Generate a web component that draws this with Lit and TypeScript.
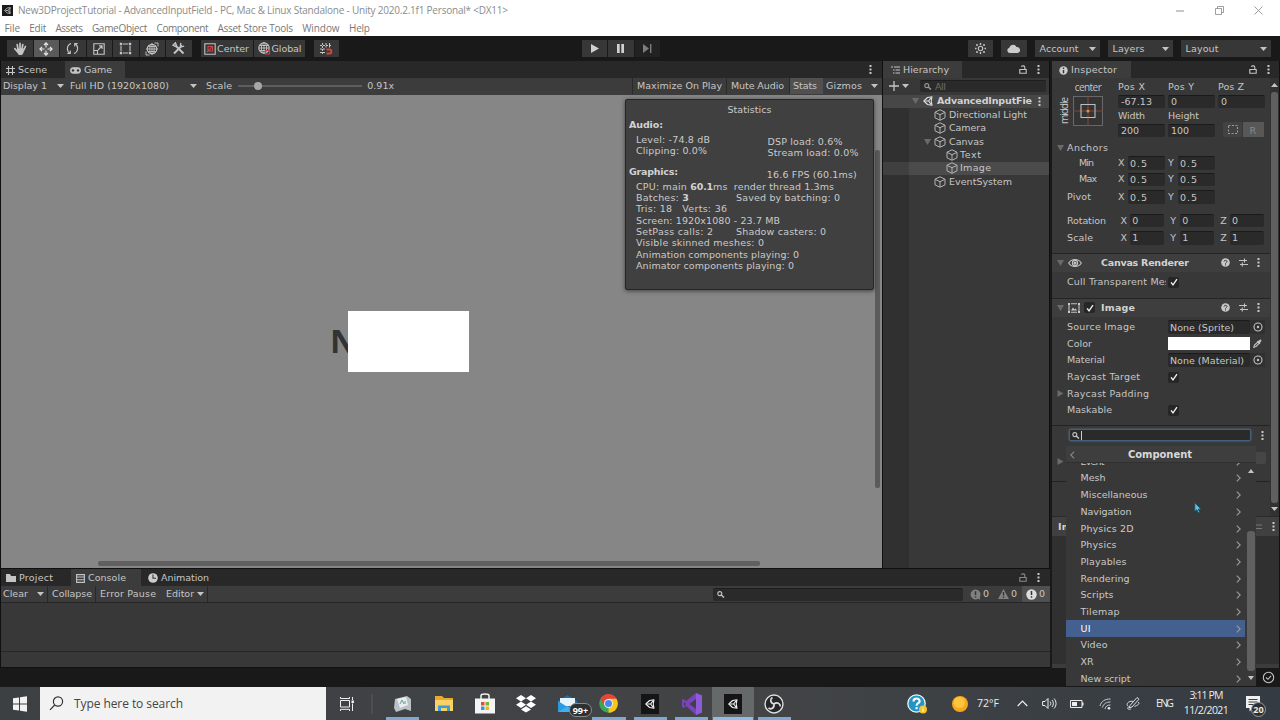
import { LitElement, html, svg, css } from "lit";
import { customElement } from "lit/decorators.js";

const UI = '"DejaVu Sans"';
const SYS = '"Open Sans"';
const ctx = document.createElement("canvas").getContext("2d")!;

/* Label whose tracking is derived from the width it has to occupy. */
const tx = (text: string, width: number, cls = "u") => {
  const fonts: Record<string, string> = {
    u: `9.5px ${UI}`,
    b: `bold 9.5px ${UI}`,
    bb: `bold 10px ${UI}`,
    m: `10px ${SYS}`,
    s: `12px ${SYS}`,
    t: `10.5px ${SYS}`,
  };
  ctx.font = fonts[cls];
  const ls = (width - ctx.measureText(text).width) / Math.max(1, text.length - 1);
  return html`<span class="tx ${cls}" style="letter-spacing:${ls.toFixed(3)}px">${text}</span>`;
};

const icon = (w: number, h: number, body: unknown, vb = `0 0 ${w} ${h}`) =>
  html`<svg width=${w} height=${h} viewBox=${vb} fill="none" stroke="#c4c4c4" stroke-width="1.1">${body}</svg>`;

const caret = () => icon(7, 4, svg`<path d="M0 0H7L3.5 4Z" fill="#c4c4c4" stroke="none"/>`);
const fold = () => icon(7, 6, svg`<path d="M0 0H7L3.5 6Z" fill="#6a6a6a" stroke="none"/>`);
const foldR = () => icon(7, 7, svg`<path d="M.5 0V7L6.5 3.5Z" fill="#6a6a6a" stroke="none"/>`);
const dots = () => icon(3, 9, svg`<path d="M.5 0h2v2h-2zM.5 3.5h2v2h-2zM.5 7h2v2h-2z" fill="#c8c8c8" stroke="none"/>`);
const lock = (c = "#c4c4c4") => icon(8, 9, svg`<path d="M.8 4.5H7.2V8.3H.8ZM2.3 1.6C3 .6 5.8 .4 5.8 2.3V4.5" stroke=${c} stroke-width="1.1"/>`);
const lens = (c = "#c4c4c4") => icon(8, 7, svg`<circle cx="2.8" cy="2.6" r="2" stroke=${c}/><path d="M4.3 4L7 6.6" stroke=${c} stroke-width="1.4"/>`);
const cube = () => icon(12, 12, svg`<path d="M6 .8L11 3.2V8.8L6 11.3L1 8.8V3.2ZM1.2 3.4L6 5.7L10.8 3.4M6 5.7V11" stroke="#b4b4b4" stroke-width="1"/>`);
const unity = (s = 10, c = "#e0e0e0") =>
  icon(s, s, svg`<path d="M.8 5L4.6 1.5L9 .8L8.2 5L9 9.2L4.6 8.5Z M2.4 5H5.6L8 1.9M5.6 5L8 8.1" stroke=${c} stroke-width="1.05" stroke-linejoin="round"/>`, "0 0 10 10");
const check = () => html`<span class="chk">${icon(8, 8, svg`<path d="M1 4.4L3 6.8L7 1.2" stroke="#eee" stroke-width="1.4"/>`)}</span>`;
const help = () => icon(9, 9, svg`<circle cx="4.5" cy="4.5" r="4.3" fill="#c8c8c8" stroke="none"/><path d="M3 3.6C3 1.9 6 1.9 6 3.6C6 4.6 4.5 4.5 4.5 5.6M4.5 6.4V7.5" stroke="#333" stroke-width="1"/>`);
const sliders = () => icon(9, 9, svg`<path d="M0 2.5H8M5.5 .5V4.5M1 6.5H9M3.3 4.5V8.5"/>`);
const target = () => icon(10, 10, svg`<circle cx="5" cy="5" r="4"/><circle cx="5" cy="5" r="1.2" fill="#c4c4c4" stroke="none"/>`);
const chevR = () => icon(5, 8, svg`<path d="M.8 .6L4.2 4L.8 7.4" stroke="#999" stroke-width="1.2"/>`);
const eye = () => icon(14, 10, svg`<path d="M.7 5C3.5 .3 10.5 .3 13.3 5C10.5 9.7 3.5 9.7 .7 5Z"/><circle cx="7" cy="5" r="2.6"/><circle cx="7" cy="5" r="1" fill="#c4c4c4"/>`);

const hand = () => icon(14, 14, svg`<path d="M5 7.5L4.2 2.5M7 7V1.3M9 7L9.8 2.5M10.8 8L12.4 4.5M4.3 9.5L1.8 6.6" stroke-width="1.7" stroke-linecap="round"/><path d="M4 6.6H11.3L10.6 10.5L9 13H5.8L3.6 9.8Z" fill="#c4c4c4" stroke="none"/>`);
const move = () => icon(14, 14, svg`<path d="M7 1.5V5.5M7 8.5V12.5M1.5 7H5.5M8.5 7H12.5M5 3L7 .9L9 3M5 11L7 13.1L9 11M3 5L.9 7L3 9M11 5L13.1 7L11 9" stroke="#e8e8e8"/>`);
const rotate = () => icon(13, 13, svg`<path d="M5 1.5C.5 3.2 .4 8.8 3.6 11M8 11.5C12.5 9.8 12.6 4.2 9.4 2M1.3 11.5H4.3V8.5M11.7 1.5H8.7V4.5"/>`);
const scale = () => icon(12, 12, svg`<path d="M.8 .8H11.2V11.2H.8ZM.8 7.5H4.5V11.2M5 7L9 3M6 2.9H9.1V6"/>`);
const rectT = () => icon(13, 13, svg`<path d="M2 4V9M11 4V9M4 2H9M4 11H9"/><path d="M.8 .8h2.4v2.4H.8zM9.8 .8h2.4v2.4H9.8zM.8 9.8h2.4v2.4H.8zM9.8 9.8h2.4v2.4H9.8z" fill="#c4c4c4" stroke="none"/>`);
const globeT = () => icon(14, 14, svg`<circle cx="7" cy="7" r="4.8"/><path d="M7 1V13M1 7H13M3.2 4.5H10.8M3.2 9.5H10.8M9.5 1H13V4.5M1 9.5V13H4.5" stroke-width=".9"/><ellipse cx="7" cy="7" rx="2.2" ry="4.8" stroke-width=".9"/>`);
const wrench = () => icon(13, 13, svg`<path d="M2 11.5L10 3.5M3.5 3.5L11.5 11.5" stroke-width="1.9"/><path d="M9 1C7.8 4.4 8.8 5.3 12.2 4.2M1 3.2L3.4 .8L4.5 3.5L3.5 4.5Z" stroke-width="1.4"/>`);
const centerI = () => icon(12, 12, svg`<path d="M.8 .8H11.2V11.2H.8Z"/><path d="M3 9.2L8.5 3.7M4 3.5h4.5V8H4Z" stroke="#c8454a"/>`);
const globalI = () => icon(13, 13, svg`<circle cx="6" cy="6" r="5.2"/><path d="M1 6H11M6 1V11M2 3.5H10M2 8.5H7" stroke-width=".9"/><ellipse cx="6" cy="6" rx="2.6" ry="5.2" stroke-width=".9"/><path d="M7.5 12V8.5H11.5V12Z" stroke="#c8454a"/>`);
const snapI = () => icon(14, 13, svg`<path d="M3.5 1V12M7 1V5.5M10.5 1V5.5M1 3.5H13M1 7H6M1 10.5H6" stroke-dasharray="2 1"/><path d="M7.5 7.5H10.5C13 7.5 13 11.5 10.5 11.5H7.5" stroke="#d8453f" stroke-width="1.8"/>`);

const field = (text: string, w: number, cls: string) => html`<span class="field ${cls}">${tx(text, w)}</span>`;

@customElement("app-root")
export class AppRoot extends LitElement {
  static styles = css`
    :host { display: block; width: 1280px; height: 720px; overflow: hidden; position: relative; background: #191919; color: #c6c6c6; font-family: "DejaVu Sans", sans-serif; }
    * { box-sizing: border-box; }
    svg { display: block; flex: none; }
    .tx { white-space: pre; flex: none; display: block; }
    .u { font: 9.5px/12px "DejaVu Sans", sans-serif; }
    .b { font: bold 9.5px/12px "DejaVu Sans", sans-serif; color: #d2d2d2; }
    .bb { font: bold 10px/13px "DejaVu Sans", sans-serif; color: #d8d8d8; }
    .m { font: 10px/14px "Open Sans", sans-serif; }
    .s { font: 12px/16px "Open Sans", sans-serif; }
    .t { font: 10.5px/15px "Open Sans", sans-serif; }
    .row, .c { display: flex; align-items: center; flex: none; }
    .c { justify-content: center; }
    .col { display: flex; flex-direction: column; }
    .grow { flex: 1; }

    .title { height: 20px; background: #fff; color: #8c8c8c; padding-left: 2px; gap: 5px; }
    .logo { width: 11px; height: 11px; background: #1b1b1b; }
    .winbtns { margin-left: auto; gap: 30px; padding-right: 17px; }
    .menu { height: 16px; background: #fff; color: #777; padding-left: 4.5px; gap: 9.4px; }
    .tools { height: 25px; background: #191919; padding-left: 7px; }
    .tb { height: 17px; background: #373737; }
    .w25 { width: 25.5px; margin-right: 1px; }
    .on { background: #5a5a5a; }
    .dim { opacity: .55; background: #2b2b2b; }
    .g10 { margin-left: 9px; }
    .play { margin-left: 241.5px; }
    .sun { margin-left: 306.5px; }
    .cloud { margin-left: 7px; }
    .pivot { justify-content: flex-start; }
    .cw { width: 52px; padding-left: 3.5px; gap: 1px; margin: 0 1px 0 8px; }
    .gw { width: 51px; padding-left: 4px; gap: 1px; }
    .dd { justify-content: space-between; padding: 0 4px 0 5px; margin-left: 8px; }
    .first { margin-left: 7px; }
    .w65 { width: 65px; } .w90 { width: 90px; }

    .work { display: flex; height: 607px; }
    .left { width: 1050px; padding-left: 1px; background: #101010; flex: none; }
    .topsplit { display: flex; height: 507px; gap: 1px; }
    .game { width: 881px; }
    .tabs { height: 17px; background: #282828; }
    .tab { height: 17px; display: flex; align-items: center; gap: 3px; padding: 1px 0 0 5px; }
    .act { background: #3c3c3c; }
    .w64 { width: 64px; } .w60 { width: 60px; } .w70 { width: 70px; } .w79 { width: 79px; }
    .hp { padding-left: 8px; } .ip { padding-left: 7px; } .an { padding-left: 7px; }
    .end { margin-left: auto; display: flex; align-items: center; gap: 10px; padding-right: 10px; }
    .hier .end, .insp .end { padding-right: 9px; }
    .bar { height: 17px; background: #3c3c3c; padding: 0 0 1px 2px; }
    .sep { border-left: 1px solid #2a2a2a; height: 16px; padding-left: 4px; display: flex; align-items: center; }
    .m6 { margin-left: 6px; } .m9 { margin-left: 9px; } .m10 { margin-left: 10px; } .m21 { margin-left: 21px; }
    .z94 { width: 94px; } .z63 { width: 63px; }
    .z34 { width: 34px; padding-left: 3px; background: #505050; }
    .z59 { width: 59px; justify-content: space-between; padding: 0 4px 0 3px; border-left: none; }
    .slider { width: 124px; height: 2px; background: #5e5e5e; margin: 0 5px 0 6px; position: relative; }
    .knob { position: absolute; left: 16px; top: -3px; width: 8px; height: 8px; border-radius: 4px; background: #a8a8a8; }
    .view { height: 473px; background: #868686; position: relative; overflow: hidden; }
    .word { position: absolute; left: 329px; top: 225px; font: bold 33px/42px "Noto Sans", sans-serif; color: #333; }
    .rect { position: absolute; left: 347px; top: 216px; width: 121px; height: 61px; background: #fff; }
    .vsb { position: absolute; left: 874px; top: 55px; width: 5px; height: 338px; background: #5b5b5b; border-radius: 2px; }
    .hsb { position: absolute; left: 97px; top: 466px; width: 662px; height: 5px; background: #606060; border-radius: 2px; }
    .stats { position: absolute; left: 624px; top: 4px; width: 249px; height: 191px; background: #404040; border: 1px solid #262626; border-radius: 2px; box-shadow: 0 1px 4px #0008; padding: 3.5px 3px; color: #cacaca; }
    .mid { justify-content: center; height: 13px; }
    .h15 { height: 16px; }
    .two { display: grid; grid-template-columns: 131.5px 1fr; padding: 1.5px 0 0 7px; height: 30px; align-items: start; }
    .two .tx { line-height: 11.3px; }
    .lower { padding-top: 2px; }
    .gr { display: flex; justify-content: space-between; padding-right: 13px; height: 18px; align-items: center; }
    .gr .tx:last-child { padding-top: 6px; }
    .lines { padding-left: 7px; }
    .ln { display: flex; height: 11.35px; align-items: center; }
    .ln .tx { line-height: 11px; }
    .g1 { width: 100px; display: flex; flex: none; }

    .hier { width: 166px; background: #383838; }
    .hbar { height: 16.6px; background: #383838; padding: 0 3px 0 6px; gap: 3px; }
    .search { background: #2a2a2a; height: 12px; border-radius: 2px; border-top: 1px solid #1e1e1e; display: flex; align-items: center; gap: 3px; padding-left: 4px; color: #6e6e6e; }
    .sw { width: 126px; margin-left: 8px; }
    .tree { flex: 1; background: linear-gradient(90deg, #303030 26px, #383838 26px); }
    .node { height: 13.35px; gap: 3px; display: flex; align-items: center; }
    .d0 { padding-left: 29px; background: #474747; gap: 4px; height: 13.6px; }
    .kd { margin-left: 2px; }
    .d1 { padding-left: 51px; } .dc { padding-left: 41px; } .d2 { padding-left: 63px; gap: 2px; }
    .sel { background: linear-gradient(90deg, #404040 26px, #4b4b4b 26px); }

    .console { height: 98px; margin-top: 1px; background: #383838; }
    .cbar { height: 17px; background: #3c3c3c; border-bottom: 1px solid #262626; padding-left: 2px; }
    .c1 { margin-left: 3px; width: 48px; } .c2 { width: 66px; }
    .c3 { width: 47px; gap: 3px; border-right: 1px solid #2a2a2a; padding-left: 5px; border-left: none; }
    .cbody { height: 49px; border-bottom: 1px solid #262626; }
    .csearch { width: 250px; margin: 0 3px 0 auto; height: 13px; }
    .cnt { width: 28px; height: 16px; gap: 2px; padding-left: 4px; }
    .lit { width: 28px; background: #505050; }

    .insp { flex: 1; background: #383838; margin-left: 2px; border-right: 1px solid #111; display: flex; flex-direction: column; }
    .ibody { display: flex; height: 438px; flex: none; }
    .iform { width: 218px; }
    .iscroll { width: 9px; background: #323232; align-items: center; padding-top: 5px; }
    .ithumb { width: 7px; height: 411px; background: #606060; border-radius: 3px; margin: 5px 0 4px; flex: none; }
    .xform { display: grid; grid-template-columns: 66px 50px 50px 50px; height: 61px; }
    .anchor { display: grid; grid-template-columns: 19px 30px; grid-template-rows: 17px 32px; padding-left: 2px; justify-items: center; align-items: center; }
    .vert { writing-mode: vertical-rl; transform: rotate(180deg); }
    .field { background: #2a2a2a; height: 13px; border-radius: 2px; border-top: 1px solid #1a1a1a; display: flex; align-items: center; padding-left: 3px; flex: none; }
    .f47 { width: 47px; }
    .f38 { width: 37px; margin-right: 3px; padding-left: 2px; }
    .f34 { width: 34px; margin-right: 6px; padding-left: 2px; }
    .f82 { width: 82px; height: 14px; padding-left: 2px; }
    .h14 { height: 14px; } .h16 { height: 16px; } .h17 { height: 16.7px; } .hl { height: 17px; } .h19 { height: 19px; } .h23 { height: 23px; padding-top: 5px; }
    .h16 .field, .h19 .field { height: 14px; }
    .pt2 { padding-top: 2px; }
    .lab { width: 66px; padding-left: 15px; display: flex; }
    .lab2 { width: 69.5px; padding-left: 15px; display: flex; }
    .in { padding-left: 27px; }
    .ax { width: 10px; }
    .fl { padding-left: 5px; gap: 3px; }
    .head { height: 19px; background: #3e3e3e; border-top: 1px solid #242424; padding-left: 5px; }
    .hb { margin-top: 7px; }
    .ico { width: 33px; margin: 0 1px 0 3px; padding-left: 1px; gap: 4px; display: flex; align-items: center; }
    .hicons { display: flex; align-items: center; gap: 9px; margin-left: auto; padding-right: 10px; }
    .cull { height: 26px; padding-bottom: 5px; }
    .prop { width: 116px; padding-left: 15px; display: flex; overflow: hidden; }
    .cut { width: 114px; margin-right: 2px; }
    .chk { width: 11px; height: 11px; background: #262626; border-radius: 2px; display: flex; align-items: center; justify-content: center; flex: none; }
    .white { width: 82px; height: 13px; background: #fff; }
    .pick { width: 15px; height: 14px; display: flex; align-items: center; justify-content: center; }
    .dark .pick { background: #303030; }
    .pad { height: 2px; }
    .rest { height: 57px; border-top: 1px solid #232323; margin-top: 6px; padding: 26px 4px 0 5px; border-bottom: 1px solid #232323; display: flex; justify-content: space-between; align-items: flex-start; }
    .rest svg { margin-top: 6px; }
    .opt { width: 18px; height: 12px; border-radius: 2px; background: #464646; }
    .prev { height: 20px; background: #404040; padding-left: 6px; border-top: 1px solid #2a2a2a; }
    .insp .prev .end { padding-right: 4px; }
    .prevbody { background: #303030; flex: 1; border-bottom: 4px solid #3c3c3c; }
    .status { height: 19px; background: #191919; display: flex; justify-content: flex-end; align-items: center; padding-right: 5px; }

    .popup { position: absolute; left: 1066px; top: 426px; width: 190px; height: 260px; background: #383838; overflow: hidden; color: #c9c9c9; }
    .psearch { height: 12px; margin: 3px 5px 0 3px; border: 1px solid #46607c; border-radius: 2px; background: #2a2a2a; display: flex; align-items: center; padding-left: 2px; gap: 1px; flex: none; box-shadow: 0 0 2px #6a7d94; }
    .pcaret { width: 1px; height: 9px; background: #ccc; }
    .phead { height: 17px; margin-top: 5px; background: #3e3e3e; display: grid; grid-template-columns: 58px 1fr; align-items: center; padding: 1px 0 0 4px; border-bottom: 1px solid #303030; flex: none; }
    .pmain { display: flex; flex: none; }
    .plist { width: 179px; height: 223.9px; overflow: hidden; display: flex; flex-direction: column; justify-content: flex-end; }
    .item { height: 16.68px; flex: none; display: flex; align-items: center; justify-content: space-between; padding: 0 4px 0 14.5px; }
    .item.hot { background: #44608f; color: #fff; }
    .pscroll { width: 11px; align-items: center; padding-top: 6px; }
    .pthumb { width: 8px; height: 140px; margin: 58px 0 5px; border-radius: 3px; background: #606060; flex: none; }
    .pdots { position: absolute; left: 1261px; top: 431px; }
    .cursor { position: absolute; left: 1193.5px; top: 502px; }

    .task { height: 33px; background: linear-gradient(90deg, #3d4043, #424446 60%, #343b42); color: #eee; display: flex; }
    .start { width: 40px; }
    .find { width: 286px; background: #f2f2f2; color: #444; padding-left: 9px; gap: 10px; }
    .tv { width: 42px; }
    .div { width: 13.5px; display: flex; align-items: center; padding-left: 3px; }
    .div i { width: 2px; height: 20px; background: #4c4e50; display: block; }
    .app { width: 41.35px; height: 33px; position: relative; }
    .open::after { content: ""; position: absolute; left: 4px; right: 4px; bottom: 0; height: 3px; background: #7fa9d0; }
    .cur { background: #66696a; }
    .cur::after { left: 1px; right: 1px; background: #8ebce4; }
    .badge { position: absolute; left: 22px; top: 16px; width: 23px; height: 14px; border: 1px solid #8a8a8a; border-radius: 7px; background: #2d2f31; display: flex; align-items: center; justify-content: center; font: bold 9px "Open Sans", sans-serif; color: #fff; }
    .ubox { width: 18px; height: 20px; background: #151515; }
    .tray { margin-left: auto; display: flex; align-items: center; padding-right: 2px; color: #ececec; }
    .hq { width: 20px; } .wx { width: 18px; margin: 0 8px 0 24px; }
    .up { width: 28px; margin-left: 8px; padding-left: 3px; }
    .k28 { width: 28px; }
    .eng { width: 30px; padding-left: 9px; display: flex; }
    .clock { width: 58px; align-items: center; justify-content: center; padding-bottom: 2px; }
    .note { width: 22px; margin: 0 14px 0 7px; height: 33px; position: relative; }
    .num { position: absolute; left: 9px; top: 15px; width: 15px; height: 15px; border-radius: 8px; background: #2c3034; border: 1px solid #9a9a9a; font: bold 9px/13px "Open Sans", sans-serif; text-align: center; }
  `;

  private inspector() {
    const axes = (label: string, w: number, vals: [string, string, number][], h: string, small = false, ind = "") => html`
      <div class="row ${h}"><span class="${small ? "lab2" : "lab"} ${ind}">${tx(label, w)}</span>
        ${vals.map(([a, v, n]) => html`<span class="ax">${tx(a, 6)}</span>${field(v, n, small ? "f34" : "f38")}`)}</div>`;
    const half: [string, string, number][] = [["X", "0.5", 17], ["Y", "0.5", 17]];
    const tools3 = html`<div class="hicons">${help()}${sliders()}${dots()}</div>`;
    return html`<section class="insp">
      <div class="tabs row"><div class="tab act w79 ip">${icon(9, 9, svg`<circle cx="4.5" cy="4.5" r="4.2" fill="#ccc" stroke="none"/><path d="M4.5 1.6V2.9M4.5 3.9V7.3" stroke="#333" stroke-width="1.4"/>`)}${tx("Inspector", 46)}</div>
        <div class="end">${lock()}${dots()}</div></div>
      <div class="ibody">
        <div class="iform col">
          <div class="xform">
            <div class="anchor"><span></span>${tx("center", 27, "m")}
              <span class="vert">${tx("middle", 27, "m")}</span>
              ${icon(30, 30, svg`<path d="M.5 .5H29.5V29.5H.5Z" stroke="#686868" fill="#343434"/><path d="M0 15H30M15 0V30" stroke="#84453f"/><path d="M8 8.5H22V21.5H8Z" stroke="#bdbdbd"/><circle cx="15" cy="15" r="1.6" fill="#e48a30" stroke="none"/>`)}</div>
            <div><div class="row hl">${tx("Pos X", 27)}</div>${field("-67.13", 31, "f47")}<div class="row h16">${tx("Width", 27)}</div>${field("200", 18, "f47")}</div>
            <div><div class="row hl">${tx("Pos Y", 26)}</div>${field("0", 6, "f47")}<div class="row h16">${tx("Height", 31)}</div>${field("100", 18, "f47")}</div>
            <div><div class="row hl">${tx("Pos Z", 26)}</div>${field("0", 6, "f47")}<div class="row h14"></div>
              ${icon(48, 16, svg`<path d="M5 0H24V15H5Z" fill="#424242" stroke="none"/><path d="M25 0H46V15H25Z" fill="#585858" stroke="none"/><path d="M10.5 3.5H19.5V11.5H10.5Z" stroke="#999" stroke-dasharray="2 1.5"/><text x="31.5" y="11.5" font-size="9.5" font-family="DejaVu Sans" fill="#8a8a8a" stroke="none">R</text>`)}</div>
          </div>
          <div class="row h16 pt2 fl">${fold()}${tx("Anchors", 41)}</div>
          ${axes("Min", 15, half, "h16", false, "in")}
          ${axes("Max", 18, half, "h17", false, "in")}
          ${axes("Pivot", 24, half, "h19")}
          ${axes("Rotation", 39, [["X", "0", 6], ["Y", "0", 6], ["Z", "0", 6]], "h23", true)}
          ${axes("Scale", 26, [["X", "1", 5], ["Y", "1", 5], ["Z", "1", 5]], "h16", true)}
          <div class="head row hb">${fold()}<span class="ico">${eye()}</span>${tx("Canvas Renderer", 88, "b")}${tools3}</div>
          <div class="row cull"><span class="prop cut">${tx("Cull Transparent Mesh", 109)}</span>${check()}</div>
          <div class="head row">${fold()}<span class="ico">${icon(12, 10, svg`<path d="M1 2V8M11 2V8M3 .8H9M3 9.2H9"/><path d="M0 0h2v2H0zM10 0h2v2h-2zM0 8h2v2H0zM10 8h2v2h-2zM3 7.5L5 4.5L6.5 6.5L7.5 5.5L9 7.5Z" fill="#ccc" stroke="none"/>`)}${check()}</span>${tx("Image", 34, "b")}${tools3}</div>
          <div class="row pad"></div>
          <div class="row h17 dark"><span class="prop">${tx("Source Image", 68)}</span>${field("None (Sprite)", 64, "f82")}<span class="pick">${target()}</span></div>
          <div class="row h17"><span class="prop">${tx("Color", 25)}</span><span class="white"></span><span class="pick">${icon(9, 9, svg`<path d="M.8 8.2L1.5 6L5 2.8L6.3 4.1L3 7.5Z"/><path d="M4.5 2.2L6.9 4.6M5.8 3.2L8 1" stroke-width="2"/>`)}</span></div>
          <div class="row h17 dark"><span class="prop">${tx("Material", 38)}</span>${field("None (Material)", 74, "f82")}<span class="pick">${target()}</span></div>
          <div class="row h17"><span class="prop">${tx("Raycast Target", 73)}</span>${check()}</div>
          <div class="row h17 fl">${foldR()}${tx("Raycast Padding", 82)}</div>
          <div class="row h17"><span class="prop">${tx("Maskable", 45)}</span>${check()}</div>
          <div class="rest">${foldR()}<span class="opt"></span></div>
        </div>
        <div class="iscroll col">${icon(7, 4, svg`<path d="M0 4H7L3.5 0Z" fill="#c4c4c4" stroke="none"/>`)}<div class="ithumb"></div>${caret()}</div>
      </div>
      <div class="prev row">${tx("Image", 34, "b")}<div class="end">${icon(8, 6, svg`<path d="M0 1H8M0 4.5H8" stroke="#777"/>`)}${dots()}</div></div>
      <div class="prevbody"></div>
    </section>`;
  }

  private game() {
    return html`<section class="game">
      <div class="tabs row"><div class="tab w64">${icon(9, 9, svg`<path d="M2.5 0V9M6.5 0V9M0 2.5H9M0 6.5H9"/>`)}${tx("Scene", 29)}</div>
        <div class="tab act w60">${icon(11, 7, svg`<rect x=".7" y=".7" width="9.6" height="5.4" rx="2.6" fill="#c4c4c4"/><circle cx="3" cy="3.4" r="1.2" fill="#333" stroke="none"/><circle cx="8" cy="3.4" r="1.2" fill="#333" stroke="none"/>`)}${tx("Game", 28)}</div>
        <div class="end">${dots()}</div></div>
      <div class="bar row">${tx("Display 1", 44)}<span class="m10">${caret()}</span><span class="m6">${tx("Full HD (1920x1080)", 99)}</span><span class="m21">${caret()}</span>
        <span class="m9">${tx("Scale", 26)}</span><div class="slider"><div class="knob"></div></div>${tx("0.91x", 27)}
        <div class="grow"></div>
        <span class="sep z94">${tx("Maximize On Play", 85)}</span><span class="sep z63">${tx("Mute Audio", 53)}</span><span class="sep z34">${tx("Stats", 24)}</span><span class="sep z59">${tx("Gizmos", 36)}${caret()}</span></div>
      <div class="view">
        <div class="word">N</div><div class="rect"></div><div class="vsb"></div><div class="hsb"></div>
        <div class="stats">
          <div class="row mid">${tx("Statistics", 44)}</div>
          <div class="row h15">${tx("Audio:", 34, "b")}</div>
          <div class="two"><div class="col">${tx("Level: -74.8 dB", 74)}${tx("Clipping: 0.0%", 71)}</div>
            <div class="col lower">${tx("DSP load: 0.6%", 75)}${tx("Stream load: 0.0%", 91)}</div></div>
          <div class="gr">${tx("Graphics:", 49, "b")}${tx("16.6 FPS (60.1ms)", 90)}</div>
          <div class="lines">
            <div class="ln">${tx("CPU: main ", 54)}${tx("60.1", 23, "b")}${tx("ms  render thread 1.3ms", 121)}</div>
            <div class="ln"><span class="g1">${tx("Batches: ", 46)}${tx("3", 6, "b")}</span>${tx("Saved by batching: 0", 104)}</div>
            <div class="ln">${tx("Tris: 18   Verts: 36", 91)}</div>
            <div class="ln">${tx("Screen: 1920x1080 - 23.7 MB", 144)}</div>
            <div class="ln"><span class="g1">${tx("SetPass calls: 2", 77)}</span>${tx("Shadow casters: 0", 90)}</div>
            <div class="ln">${tx("Visible skinned meshes: 0", 128)}</div>
            <div class="ln">${tx("Animation components playing: 0", 163)}</div>
            <div class="ln">${tx("Animator components playing: 0", 158)}</div>
          </div>
        </div>
      </div></section>`;
  }

  private hierarchy() {
    return html`<section class="hier col">
      <div class="tabs row"><div class="tab act w79 hp">${icon(9, 8, svg`<path d="M0 1H2M3 1H9M2 4H3.5M4.5 4H9M2 7H3.5M4.5 7H9"/>`)}${tx("Hierarchy", 46)}</div><div class="end">${lock()}${dots()}</div></div>
      <div class="hbar row">${icon(10, 10, svg`<path d="M5 0V10M0 5H10" stroke-width="1.3"/>`)}${caret()}<div class="search sw">${lens("#999")}${tx("All", 11)}</div></div>
      <div class="tree">
        <div class="node d0">${fold()}${unity(10)}${tx("AdvancedInputFie", 95, "b")}<span class="kd">${dots()}</span></div>
        <div class="node d1">${cube()}${tx("Directional Light", 78)}</div>
        <div class="node d1">${cube()}${tx("Camera", 37)}</div>
        <div class="node dc">${fold()}${cube()}${tx("Canvas", 35)}</div>
        <div class="node d2">${cube()}${tx("Text", 21)}</div>
        <div class="node d2 sel">${cube()}${tx("Image", 31)}</div>
        <div class="node d1">${cube()}${tx("EventSystem", 63)}</div>
      </div></section>`;
  }

  private console() {
    return html`<section class="console">
      <div class="tabs row"><div class="tab w70">${icon(10, 8, svg`<path d="M0 0H4L5 2H10V8H0Z" fill="#c4c4c4" stroke="none"/>`)}${tx("Project", 34)}</div>
        <div class="tab act w70">${icon(9, 9, svg`<path d="M.6 .6H8.4V8.4H.6ZM.6 3H8.4M.6 5.7H8.4" />`)}${tx("Console", 38)}</div>
        <div class="tab an">${icon(10, 10, svg`<circle cx="5" cy="5" r="4.8" fill="#ccc" stroke="none"/><path d="M5 1.5V5.3H8" stroke="#333"/>`)}${tx("Animation", 48)}</div>
        <div class="end">${lock("#888")}${dots()}</div></div>
      <div class="cbar row">${tx("Clear", 25)}<span class="m9">${caret()}</span><span class="sep c1">${tx("Collapse", 40)}</span><span class="sep c2">${tx("Error Pause", 56)}</span><span class="sep c3">${tx("Editor", 28)}${caret()}</span>
        <div class="search csearch">${lens()}</div>
        <span class="cnt row">${icon(11, 11, svg`<path d="M5.5 .5A5 5 0 1 0 8.5 9.6L10 11V7.6A5 5 0 0 0 5.5 .5Z" fill="#808080" stroke="none"/><path d="M5.5 2.2V6M5.5 7.2V8.6" stroke="#333" stroke-width="1.5"/>`)}${tx("0", 6)}</span>
        <span class="cnt row">${icon(11, 10, svg`<path d="M5.5 0L11 10H0Z" fill="#808080" stroke="none"/><path d="M5.5 3V6.5M5.5 7.5V9" stroke="#333" stroke-width="1.3"/>`)}${tx("0", 6)}</span>
        <span class="cnt row lit">${icon(11, 11, svg`<circle cx="5.5" cy="5.5" r="5.2" fill="#ddd" stroke="none"/><path d="M5.5 2V6M5.5 7.2V8.8" stroke="#333" stroke-width="1.5"/>`)}${tx("0", 6)}</span></div>
      <div class="cbody"></div></section>`;
  }

  private popup() {
    const items: [string, number][] = [["Event", 24], ["Mesh", 25], ["Miscellaneous", 67], ["Navigation", 51], ["Physics 2D", 53], ["Physics", 36], ["Playables", 46], ["Rendering", 49], ["Scripts", 33], ["Tilemap", 39], ["UI", 10], ["Video", 27], ["XR", 13], ["New script", 50]];
    return html`<div class="popup col">
      <div class="psearch">${lens()}<div class="pcaret"></div></div>
      <div class="phead">${icon(5, 8, svg`<path d="M4.2 .6L.8 4L4.2 7.4" stroke="#888"/>`)}${tx("Component", 64, "bb")}</div>
      <div class="pmain"><div class="plist">${items.map(([n, w]) => html`<div class="item ${n === "UI" ? "hot" : ""}">${tx(n, w)}${chevR()}</div>`)}</div>
        <div class="pscroll col">${icon(6, 4, svg`<path d="M0 4H6L3 0Z" fill="#c4c4c4" stroke="none"/>`)}<div class="pthumb"></div>${icon(6, 4, svg`<path d="M0 0H6L3 4Z" fill="#c4c4c4" stroke="none"/>`)}</div></div>
    </div>`;
  }

  private taskbar() {
    const pic = (w: number, h: number, body: unknown) => html`<svg width=${w} height=${h} viewBox="0 0 ${w} ${h}" fill="none">${body}</svg>`;
    return html`<footer class="task">
      <div class="start c">${pic(14, 16, svg`<path d="M0 2.3L6 1.4V7.5H0ZM7 1.2L14 .2V7.5H7ZM0 8.5H6V14.6L0 13.7ZM7 8.5H14V15.8L7 14.8Z" fill="#f2f2f2"/>`)}</div>
      <div class="find row">${pic(15, 15, svg`<circle cx="9" cy="5.5" r="4.6" stroke="#333" stroke-width="1.2"/><path d="M5.7 9L1 13.8" stroke="#333" stroke-width="1.2"/>`)}${tx("Type here to search", 109, "s")}</div>
      <div class="tv c">${pic(14, 14, svg`<path d="M.5 3.5H9.5V10H.5ZM.5 0V1.5H9.5V0M.5 14V12.3H9.5V14M12.5 0V3M12.5 6.5V14" stroke="#eee"/><path d="M11.5 3.5H14V6H11.5Z" fill="#eee"/>`)}</div>
      <div class="div"><i></i></div>
      <div class="app c open">${pic(19, 18, svg`<path d="M2 4L14 1L18 4V16L12 14L3 17L1 13Z" fill="#b9c2c6"/><path d="M4 4L13 2L15 10L7 13Z" fill="#e8eded"/><path d="M7 9L9 5L11 9M12 6V9" stroke="#6d9a8e"/>`)}</div>
      <div class="app c">${pic(20, 17, svg`<path d="M1 1H8L10 3H19V16H1Z" fill="#e8a92e"/><path d="M1 5H19V16H1Z" fill="#f9d267"/><path d="M4 16V10.5H16V16H13V13H7V16Z" fill="#3d9bd6"/>`)}</div>
      <div class="app c">${pic(20, 22, svg`<path d="M6 6V2.5C6 .6 14 .6 14 2.5V6" stroke="#f2f2f2" stroke-width="1.5"/><path d="M0 5.5H20V20.5H0Z" fill="#f4f4f4"/><path d="M6 9H9.5V12.5H6Z" fill="#e8502a"/><path d="M10.5 9H14V12.5H10.5Z" fill="#79b530"/><path d="M6 13.5H9.5V17H6Z" fill="#2b9ae0"/><path d="M10.5 13.5H14V17H10.5Z" fill="#f5b520"/>`)}</div>
      <div class="app c">${pic(20, 18, svg`<path d="M5 0L10 3.2L5 6.4L0 3.2ZM15 0L20 3.2L15 6.4L10 3.2ZM5 6.6L10 9.8L5 13L0 9.8ZM15 6.6L20 9.8L15 13L10 9.8ZM10 11.2L15 14.4L10 17.6L5 14.4Z" fill="#fff"/>`)}</div>
      <div class="app c">${pic(19, 18, svg`<path d="M0 6L9.5 0L19 6V17H0Z" fill="#1670b8"/><path d="M2 3H17V11H2Z" fill="#e8f4fb"/><path d="M0 6L9.5 12L0 17Z" fill="#2b9be0"/><path d="M0 17L9.5 11L19 17Z" fill="#40b0ee"/>`)}<span class="badge">99+</span></div>
      <div class="app c open">${pic(19, 19, svg`<circle cx="9.5" cy="9.5" r="9.3" fill="#3aa757"/><path d="M9.5 9.5L1.4 4.8A9.3 9.3 0 0 1 17.6 4.9Z" fill="#e2453a"/><path d="M9.5 9.5L17.6 4.9A9.3 9.3 0 0 1 9.6 18.8Z" fill="#fbc31c"/><path d="M9.5 4.8H17.6L13.6 11.9Z" fill="#fbc31c"/><path d="M1.4 4.8L5.4 11.9L9.5 4.8Z" fill="#e2453a"/><circle cx="9.5" cy="9.5" r="4.5" fill="#eee"/><circle cx="9.5" cy="9.5" r="3.5" fill="#4587ee"/>`)}</div>
      <div class="app c open"><div class="ubox c">${unity(10, "#f5f5f5")}</div></div>
      <div class="app c open">${pic(20, 22, svg`<path d="M14 0L20 2.5V19.5L14 22L4 13L1.5 15L0 14V7L1.5 6L4 8Z" fill="#7a43bd"/><path d="M14 6V16L7.5 11ZM2 9V13L4 11Z" fill="#3f4244"/><path d="M14 0L20 2.5V19.5L14 22Z" fill="#8e5bd8"/>`)}</div>
      <div class="app c open cur"><div class="ubox c">${unity(10, "#f5f5f5")}</div></div>
      <div class="app c open">${pic(20, 20, svg`<circle cx="10" cy="10" r="9" stroke="#ddd" stroke-width="1.4" fill="#252628"/><path d="M10 10C6 9 6 5 8.5 3.5M10 10C13 7.5 16.5 9.5 16.3 12.5M10 10C10.5 14 7 16 4.5 14" stroke="#ddd" stroke-width="1.7"/>`)}</div>
      <div class="tray">
        <div class="hq c">${pic(20, 20, svg`<circle cx="9.5" cy="9.5" r="8.7" fill="#2394c6" stroke="#eef6fa" stroke-width="1.3"/><path d="M6.5 7.5C6.5 3.5 12.8 3.6 12.6 7.3C12.4 9.5 9.6 9 9.6 11.7M9.6 13V15.2" stroke="#fff" stroke-width="2.1"/><circle cx="16" cy="15.5" r="4" fill="#f2c230"/><path d="M16 13.2V14.3M16 15V18" stroke="#fff"/>`)}</div>
        <div class="wx c">${pic(18, 18, svg`<circle cx="9" cy="9" r="8" fill="#f8a71c"/><circle cx="8.3" cy="7.5" r="5.6" fill="#fdc53e"/>`)}</div>
        ${tx("72°F", 22, "t")}
        <div class="up c">${pic(11, 7, svg`<path d="M.7 6L5.5 1L10.3 6" stroke="#eee" stroke-width="1.2"/>`)}</div>
        <div class="k28 c">${pic(15, 13, svg`<path d="M.6 4.5H3L6 1.5V11.5L3 8.5H.6ZM8 4.5C9 5.5 9 7.5 8 8.5M10 3C11.8 4.8 11.8 8.2 10 10M12 1.5C14.7 4.3 14.7 8.7 12 11.5" stroke="#eee"/>`)}</div>
        <div class="k28 c">${pic(14, 8, svg`<path d="M.5 .5H12V7.5H.5Z" stroke="#eee"/><path d="M2 2H7V6H2ZM12 2.5H13.5V5.5H12Z" fill="#eee"/>`)}</div>
        <div class="k28 c">${pic(13, 12, svg`<path d="M1 8C2 3.5 6 .8 11.5 1M3.5 9.5C4.2 6 7.5 3.8 11.5 4M6 11C6.5 8.5 8.5 6.8 11.5 7" stroke="#ccc"/><circle cx="10" cy="10.3" r="1.3" fill="#eee"/>`)}</div>
        <div class="k28 c">${pic(15, 15, svg`<path d="M4 9.5L11 1.5L13 3.2L6 11L3.3 11.8ZM7 5.3C2 4.8 0 8 1.8 10.2M12 6C15 8 10.5 9.5 8.5 10.5" stroke="#ddd"/><path d="M4 11C.5 10.5 1 14.3 4.8 13" stroke="#ddd"/>`)}</div>
        <div class="eng">${tx("ENG", 18, "t")}</div>
        <div class="clock col">${tx("3:11 PM", 34, "t")}${tx("11/2/2021", 45, "t")}</div>
        <div class="note c">${pic(15, 16, svg`<path d="M0 0H14V12H7L3.5 15.5V12H0Z" fill="#f0f0f0"/><path d="M2.5 3.5H11.5M2.5 6H11.5M2.5 8.5H9" stroke="#3a3f44"/>`)}<span class="num">20</span></div>
      </div>
    </footer>`;
  }

  render() {
    const menus: [string, number][] = [["File", 15.5], ["Edit", 17], ["Assets", 27.5], ["GameObject", 55.5], ["Component", 52], ["Asset Store Tools", 75.5], ["Window", 37.5], ["Help", 21]];
    return html`
      <header class="title row"><div class="logo c">${unity(7)}</div>${tx("New3DProjectTutorial - AdvancedInputField - PC, Mac & Linux Standalone - Unity 2020.2.1f1 Personal* <DX11>", 490, "m")}
        <div class="winbtns row">${icon(9, 9, svg`<path d="M0 5H8" stroke="#999"/>`)}${icon(9, 9, svg`<path d="M.5 2.5H6.5V8.5H.5ZM2.5 2.5V.5H8.5V6.5H6.5" stroke="#888" stroke-width=".8"/>`)}${icon(9, 9, svg`<path d="M.5 .5L8.5 8.5M8.5 .5L.5 8.5" stroke="#888" stroke-width=".8"/>`)}</div></header>
      <nav class="menu row">${menus.map(([n, w]) => tx(n, w, "m"))}</nav>
      <div class="tools row">
        ${[hand, move, rotate, scale, rectT, globeT, wrench].map((f, i) => html`<div class="tb c w25 ${i === 1 ? "on" : ""}">${f()}</div>`)}
        <div class="tb c pivot cw">${centerI()}${tx("Center", 32)}</div>
        <div class="tb c pivot gw">${globalI()}${tx("Global", 30)}</div>
        <div class="tb c w25 g10">${snapI()}</div>
        <div class="tb c w25 play">${icon(9, 9, svg`<path d="M1 0L9 4.5L1 9Z" fill="#d0d0d0" stroke="none"/>`)}</div>
        <div class="tb c w25">${icon(7, 9, svg`<path d="M0 0H2.7V9H0ZM4.3 0H7V9H4.3Z" fill="#d0d0d0" stroke="none"/>`)}</div>
        <div class="tb c w25 dim">${icon(9, 9, svg`<path d="M0 0L6 4.5L0 9ZM7 0H8.4V9H7Z" fill="#d0d0d0" stroke="none"/>`)}</div>
        <div class="tb c w25 sun">${icon(11, 11, svg`<circle cx="5.5" cy="5.5" r="2.2"/><path d="M5.5 0V2M5.5 9V11M0 5.5H1.5M9.5 5.5H11M1 2H3M1 9H3M8 2H10M8 9H10" stroke-width="1.4"/>`)}</div>
        <div class="tb c w25 cloud">${icon(13, 9, svg`<path d="M3 9A2.7 2.7 0 0 1 2.3 3.7A3.8 3.8 0 0 1 9.5 3A3 3 0 0 1 10.5 9Z" fill="#ccc" stroke="none"/>`)}</div>
        <div class="tb row dd first w65">${tx("Account", 39)}${caret()}</div>
        <div class="tb row dd w65">${tx("Layers", 32)}${caret()}</div>
        <div class="tb row dd w90">${tx("Layout", 33)}${caret()}</div>
      </div>
      <main class="work"><div class="left col"><div class="topsplit">${this.game()}${this.hierarchy()}</div>${this.console()}</div>${this.inspector()}</main>
      <div class="status">${icon(13, 13, svg`<circle cx="6.5" cy="6.5" r="5.2"/><path d="M4 6.5L6 8.3L9 4.8"/>`)}</div>
      ${this.taskbar()}
      ${this.popup()}
      <div class="pdots">${dots()}</div>
      <div class="cursor">${icon(8, 12, svg`<path d="M.8 .8V9.5L2.8 7.7L4.2 10.8L5.6 10.2L4.4 7.2H7Z" fill="#5cc3ea" stroke="#1d4a5e" stroke-width=".8"/>`)}</div>`;
  }
}
